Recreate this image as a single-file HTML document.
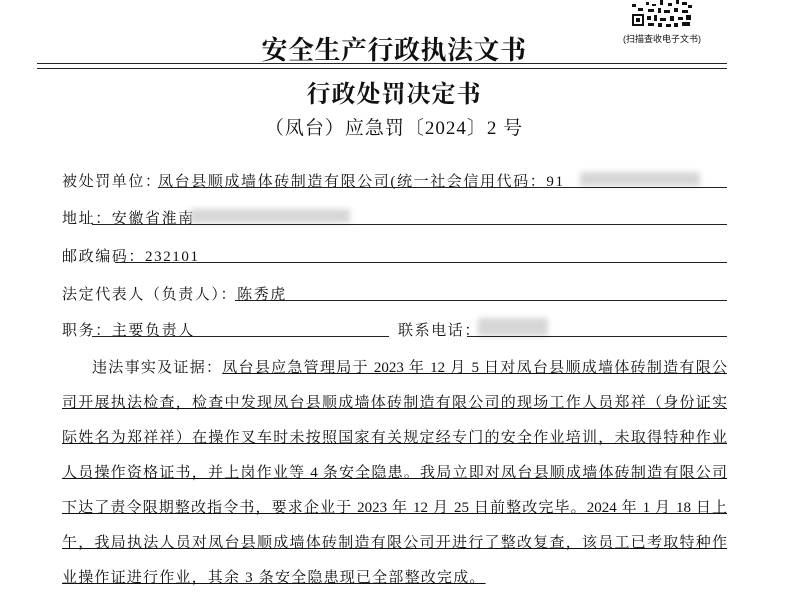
<!DOCTYPE html>
<html><head><meta charset="utf-8"><style>
body{margin:0;width:788px;height:605px;background:#fff;overflow:hidden;position:relative;font-family:"Liberation Serif","Noto Serif CJK SC",serif;color:#111}
.a{position:absolute;white-space:nowrap}
.l{position:absolute;height:0;border-top:1.3px solid #222}
.f{font-size:15px;letter-spacing:1.6px}
.p{position:absolute;left:62px;width:665px;font-size:15px;text-align:justify;text-align-last:justify;white-space:nowrap;letter-spacing:0}
.blur{position:absolute;background:#ccc;filter:blur(3px);opacity:.8}
</style></head><body>
<svg class="a" style="left:630px;top:0" width="64" height="28" viewBox="0 0 64 28">
<rect width="64" height="28" fill="#fff"/>
<g fill="#111">
<rect x="2" y="14" width="12" height="12"/><rect x="4" y="16" width="8" height="8" fill="#fff"/><rect x="6" y="18" width="4" height="4"/>
<rect x="16" y="2" width="3" height="3"/><rect x="22" y="4" width="4" height="2"/><rect x="30" y="0" width="3" height="5"/><rect x="38" y="3" width="4" height="3"/><rect x="46" y="0" width="3" height="4"/><rect x="52" y="2" width="5" height="3"/><rect x="58" y="5" width="4" height="3"/>
<rect x="2" y="4" width="4" height="3"/><rect x="8" y="8" width="5" height="3"/><rect x="18" y="9" width="6" height="3"/><rect x="28" y="8" width="3" height="5"/><rect x="34" y="10" width="6" height="3"/><rect x="44" y="8" width="4" height="4"/><rect x="52" y="10" width="6" height="3"/>
<rect x="17" y="16" width="4" height="4"/><rect x="24" y="15" width="3" height="6"/><rect x="30" y="18" width="6" height="3"/><rect x="40" y="16" width="4" height="5"/><rect x="48" y="17" width="5" height="3"/><rect x="56" y="15" width="5" height="5"/>
<rect x="18" y="23" width="6" height="3"/><rect x="28" y="23" width="4" height="4"/><rect x="36" y="24" width="5" height="3"/><rect x="44" y="23" width="4" height="4"/><rect x="52" y="22" width="8" height="4"/>
</g></svg>
<div class="a" style="left:623px;top:32px;font-size:9px;font-family:'Liberation Sans','Noto Sans CJK SC',sans-serif">(扫描查收电子文书)</div>
<div class="a" style="left:0;width:788px;top:30px;text-align:center;font-size:26px;font-weight:bold;font-family:'Liberation Serif','Noto Serif CJK SC',serif;letter-spacing:0.5px">安全生产行政执法文书</div>
<div class="l" style="left:37px;width:690px;top:63px;border-top-width:1.5px"></div>
<div class="l" style="left:37px;width:690px;top:68px;border-top-width:1.5px"></div>
<div class="a" style="left:0;width:788px;top:74px;text-align:center;font-size:24px;font-weight:bold;letter-spacing:1px">行政处罚决定书</div>
<div class="a" style="left:0;width:788px;top:113px;text-align:center;font-size:19px;letter-spacing:1px">（凤台）应急罚〔2024〕2 号</div>

<div class="a f" style="left:62px;top:170px">被处罚单位：</div>
<div class="a f" style="left:158px;top:170px">凤台县顺成墙体砖制造有限公司(统一社会信用代码：91</div>
<div class="blur" style="left:580px;top:172px;width:120px;height:14px"></div>
<div class="l" style="left:158px;width:569px;top:187px"></div>

<div class="a f" style="left:62px;top:207px">地址：安徽省淮南</div>
<div class="blur" style="left:190px;top:209px;width:160px;height:14px"></div>
<div class="l" style="left:92px;width:635px;top:224px"></div>

<div class="a f" style="left:62px;top:245px">邮政编码：232101</div>
<div class="l" style="left:115px;width:612px;top:262px"></div>

<div class="a f" style="left:62px;top:283px">法定代表人（负责人）：陈秀虎</div>
<div class="l" style="left:235px;width:492px;top:300px"></div>

<div class="a f" style="left:62px;top:319px">职务：主要负责人</div>
<div class="l" style="left:92px;width:297px;top:336px"></div>
<div class="a f" style="left:398px;top:319px">联系电话：</div>
<div class="blur" style="left:478px;top:318px;width:70px;height:18px"></div>
<div class="l" style="left:467px;width:260px;top:336px"></div>

<div class="p" style="top:356px;left:92px;width:635px">违法事实及证据：<span style="text-decoration:underline">凤台县应急管理局于 2023 年 12 月 5 日对凤台县顺成墙体砖制造有限公</span></div>
<div class="p" style="top:391px;text-decoration:underline">司开展执法检查，检查中发现凤台县顺成墙体砖制造有限公司的现场工作人员郑祥（身份证实</div>
<div class="p" style="top:426px;text-decoration:underline">际姓名为郑祥祥）在操作叉车时未按照国家有关规定经专门的安全作业培训，未取得特种作业</div>
<div class="p" style="top:461px;text-decoration:underline">人员操作资格证书，并上岗作业等 4 条安全隐患。我局立即对凤台县顺成墙体砖制造有限公司</div>
<div class="p" style="top:496px;text-decoration:underline">下达了责令限期整改指令书，要求企业于 2023 年 12 月 25 日前整改完毕。2024 年 1 月 18 日上</div>
<div class="p" style="top:531px;text-decoration:underline">午，我局执法人员对凤台县顺成墙体砖制造有限公司开进行了整改复查，该员工已考取特种作</div>
<div class="a f" style="top:566px;left:62px;text-decoration:underline;letter-spacing:1.2px">业操作证进行作业，其余 3 条安全隐患现已全部整改完成。</div>
</body></html>
